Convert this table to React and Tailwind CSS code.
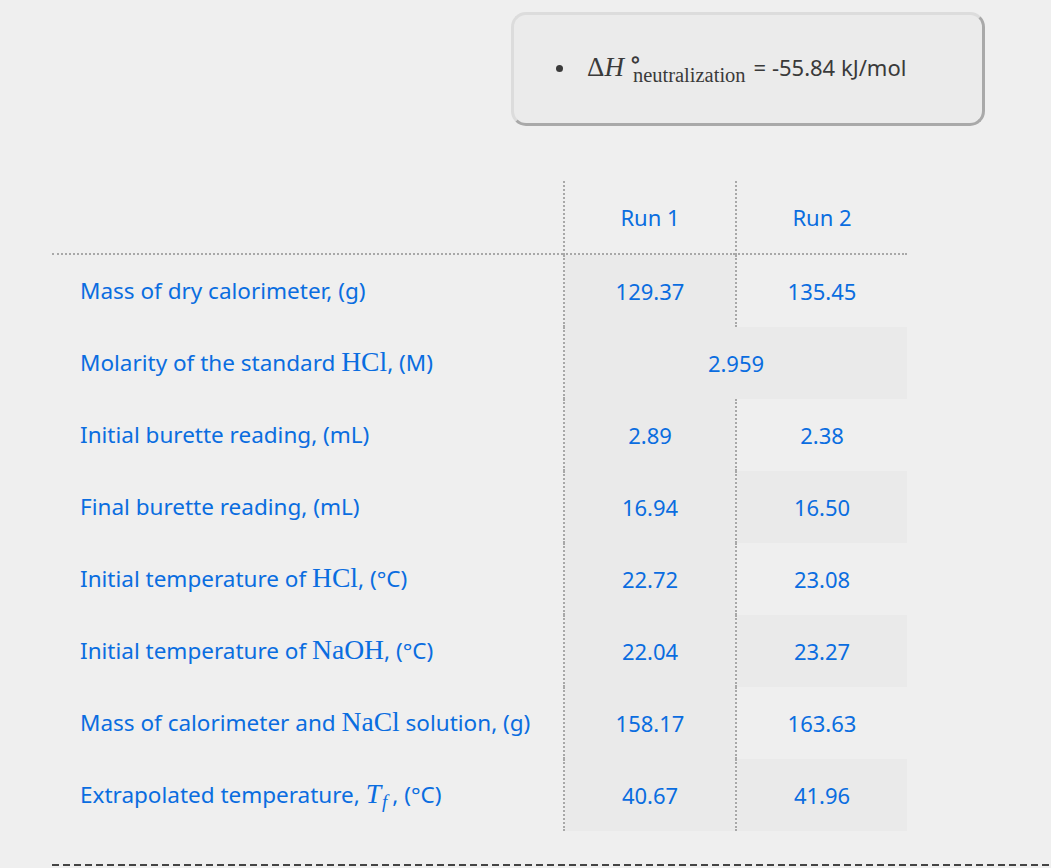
import React from "react";

const M = ({ children }) => (
  <span className="font-['Liberation_Serif','DejaVu_Serif',serif] text-[27.6px] leading-none">{children}</span>
);

const rows = [
  { label: <>Mass of dry calorimeter, (g)</>, v: ["129.37", "135.45"] },
  { label: <>Molarity of the standard <M>HCl</M>, (M)</>, v: ["2.959"] },
  { label: <>Initial burette reading, (mL)</>, v: ["2.89", "2.38"] },
  { label: <>Final burette reading, (mL)</>, v: ["16.94", "16.50"] },
  { label: <>Initial temperature of <M>HCl</M>, (°C)</>, v: ["22.72", "23.08"] },
  { label: <>Initial temperature of <M>NaOH</M>, (°C)</>, v: ["22.04", "23.27"] },
  { label: <>Mass of calorimeter and <M>NaCl</M> solution, (g)</>, v: ["158.17", "163.63"] },
  {
    label: (
      <>
        Extrapolated temperature,{" "}
        <M>
          <span className="italic">T</span>
          <span className="relative top-[5px] text-[19px] italic ml-[1px] mr-[5px]">f</span>
        </M>
        , (°C)
      </>
    ),
    v: ["40.67", "41.96"],
  },
];

export default function App() {
  return (
    <div className="min-h-screen bg-[#efefef] font-['Noto_Sans',sans-serif] text-[22px] pb-[2px]">
      <div className="pt-[12px] pl-[511px]">
        <div className="w-[474px] h-[114px] rounded-[15px] border-[3px] border-t-[#dcdcdc] border-l-[#dcdcdc] border-r-[#a9a9a9] border-b-[#a9a9a9] bg-[#ebebeb] flex items-center pl-[42px] pb-[4px] text-[#3a3a3a]">
          <span className="w-[7px] h-[7px] rounded-full bg-[#3a3a3a] mr-[24px] mt-[2px]" />
          <span className="font-['Liberation_Serif','DejaVu_Serif',serif] text-[27px] leading-none whitespace-nowrap">
            Δ<span className="italic">H</span>
            <span className="inline-block w-0 relative top-[-8px] ml-[5px] text-[26px] leading-none font-['DejaVu_Serif',serif]">∘</span>
            <span className="relative top-[6px] ml-[4px] text-[20.5px] leading-none">neutralization</span>
          </span>
          <span className="ml-[8px] whitespace-nowrap">= -55.84 kJ/mol</span>
        </div>
      </div>

      <div className="mt-[55px] ml-[52px] grid grid-cols-[511px_172px_172px] text-[#0a6de0]">
        <div className="h-[74px] border-b-2 border-dotted border-[#a8a8a8]" />
        <div className="h-[74px] border-b-2 border-l-2 border-dotted border-[#a8a8a8] flex items-center justify-center">Run 1</div>
        <div className="h-[74px] border-b-2 border-l-2 border-dotted border-[#a8a8a8] flex items-center justify-center">Run 2</div>

        {rows.map((r, i) => {
          const even = i % 2 === 1;
          return (
            <React.Fragment key={i}>
              <div className="h-[72px] flex items-center pl-[28px] whitespace-nowrap text-[22.5px]">
                <span>{r.label}</span>
              </div>
              {r.v.length === 1 ? (
                <div className="col-span-2 h-[72px] border-l-2 border-dotted border-[#a8a8a8] bg-[#eaeaea] bg-clip-padding flex items-center justify-center">
                  {r.v[0]}
                </div>
              ) : (
                <>
                  <div className="h-[72px] border-l-2 border-dotted border-[#a8a8a8] bg-[#eaeaea] bg-clip-padding flex items-center justify-center">
                    {r.v[0]}
                  </div>
                  <div
                    className={
                      "h-[72px] border-l-2 border-dotted border-[#a8a8a8] bg-clip-padding flex items-center justify-center " +
                      (even ? "bg-[#eaeaea]" : "")
                    }
                  >
                    {r.v[1]}
                  </div>
                </>
              )}
            </React.Fragment>
          );
        })}
      </div>

      <div className="mt-[33px] ml-[52px] h-[2px] bg-[repeating-linear-gradient(90deg,#444_0px,#444_7px,transparent_7px,transparent_11px)]" />
    </div>
  );
}
